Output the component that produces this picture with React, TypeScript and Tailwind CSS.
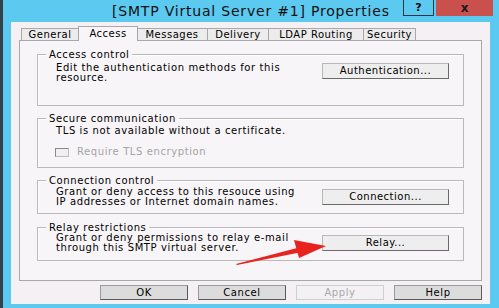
import React from "react";

const font = { fontFamily: '"DejaVu Sans", Verdana, sans-serif' };

const GroupButton = ({ label, top }: { label: string; top: string }) => (
  <button
    className={`${top} h-[16px] w-[127px] shrink-0 bg-[#eeeeee] border border-[#b8b8b8] border-r-[#6a6a6a] border-b-[#6a6a6a] text-[10px] leading-[12px] tracking-[0.5px] text-black`}
  >
    {label}
  </button>
);

const Group = ({
  title,
  height,
  className,
  children,
}: {
  title: string;
  height: string;
  className?: string;
  children: React.ReactNode;
}) => (
  <div
    className={`relative ${height} border border-[#b9b9b9] shadow-[inset_1px_1px_0_#ffffff] ${className ?? ""}`}
  >
    <span className="absolute left-[8px] -top-[6px] bg-[#f8f5f8] px-[3px] text-[10px] leading-[11px] tracking-[0.6px] text-black">
      {title}
    </span>
    {children}
  </div>
);

const tabs = [
  { label: "General", w: "w-[58px]" },
  { label: "Access", w: "w-[60px]", active: true },
  { label: "Messages", w: "w-[71px]" },
  { label: "Delivery", w: "w-[61px]" },
  { label: "LDAP Routing", w: "w-[95px]" },
  { label: "Security", w: "w-[52px]" },
];

export default function App() {
  return (
    <div
      className="relative w-[499px] h-[308px] overflow-hidden bg-[#5cc9f0] border-l-[3px] border-[#34434b] text-black"
      style={font}
    >
      {/* Title bar */}
      <div className="flex h-[22px]">
        <div className="w-[109px] shrink-0" />
        <div className="pt-[3px] text-[14px] leading-[16px] tracking-[0.8px] text-[#111]">
          [SMTP Virtual Server #1] Properties
        </div>
        <div className="flex-1" />
        <div className="flex h-[16px] items-start">
          <div className="flex h-[16px] w-[31px] items-center justify-center border border-[#2b3a42] border-t-0 text-[11px] font-bold leading-none">
            ?
          </div>
          <div className="ml-[2px] flex h-[16px] w-[57px] items-center justify-center bg-[#c9504d] text-[12px] font-bold leading-none text-[#1a1a1a]">
            x
          </div>
          <div className="w-[6px]" />
        </div>
      </div>

      {/* Client area */}
      <div className="ml-[8px] w-[479px] h-[282px] bg-[#f4f0f4] px-[8px] pt-[5px]">
        {/* Tabs */}
        <div className="flex h-[13px] items-end pl-[2px] tracking-[0.5px]">
          {tabs.map((t) =>
            t.active ? (
              <div
                key={t.label}
                className={`${t.w} relative z-10 -mb-[1px] -mx-[1px] h-[15px] border border-b-0 border-[#a8a8a8] bg-[#f8f5f8] text-center text-[10px] leading-[13px]`}
              >
                {t.label}
              </div>
            ) : (
              <div
                key={t.label}
                className={`${t.w} h-[12px] border border-b-0 border-l-0 first:border-l border-[#a8a8a8] bg-[#ececec] text-center text-[10px] leading-[11px]`}
              >
                {t.label}
              </div>
            )
          )}
        </div>

        {/* Tab panel */}
        <div className="h-[241px] border border-[#a8a8a8] bg-[#f8f5f8] px-[17px] pt-[13px] tracking-[0.6px]">
          <Group title="Access control" height="h-[52px]">
            <div className="flex justify-between pl-[18px] pr-[14px] pt-[8px]">
              <div className="text-[10px] leading-[10px]">
                Edit the authentication methods for this
                <br />
                resource.
              </div>
              <GroupButton label="Authentication..." top="mt-0" />
            </div>
          </Group>

          <Group title="Secure communication" height="h-[50px]" className="mt-[12px]">
            <div className="pl-[18px] pt-[7px] text-[10px] leading-[10px]">
              TLS is not available without a certificate.
            </div>
            <div className="mt-[11px] flex items-center pl-[17px]">
              <div className="h-[9px] w-[14px] border border-[#bdbdbd] border-t-[#8a8a8a] border-l-[#8a8a8a] bg-[#f0eef0]" />
              <span className="ml-[8px] text-[10px] leading-[10px] text-[#a4a4a4]">
                Require TLS encryption
              </span>
            </div>
          </Group>

          <Group title="Connection control" height="h-[34px]" className="mt-[12px]">
            <div className="flex justify-between pl-[18px] pr-[14px] pt-[6px]">
              <div className="text-[10px] leading-[10px]">
                Grant or deny access to this resouce using
                <br />
                IP addresses or Internet domain names.
              </div>
              <GroupButton label="Connection..." top="mt-[2px]" />
            </div>
          </Group>

          <Group title="Relay restrictions" height="h-[34px]" className="mt-[13px]">
            <div className="flex justify-between pl-[18px] pr-[14px] pt-[5px]">
              <div className="text-[10px] leading-[10px]">
                Grant or deny permissions to relay e-mail
                <br />
                through this SMTP virtual server.
              </div>
              <GroupButton label="Relay..." top="mt-[2px]" />
            </div>
          </Group>
        </div>

        {/* Dialog buttons */}
        <div className="mt-[4px] flex justify-end gap-[10px] tracking-[0.6px]">
          {["OK", "Cancel", "Apply", "Help"].map((b) => (
            <button
              key={b}
              className={
                b === "Apply"
                  ? "h-[15px] w-[88px] border border-[#cfcfcf] bg-[#f3f1f3] text-[10px] leading-[12px] text-[#a8a8a8]"
                  : "h-[15px] w-[88px] border border-[#9a9a9a] border-r-[#5a5a5a] border-b-[#5a5a5a] bg-[#dcdcdc] text-[10px] leading-[12px] text-black"
              }
            >
              {b}
            </button>
          ))}
        </div>
      </div>

      {/* Red annotation arrow */}
      <svg
        className="pointer-events-none absolute left-0 top-0"
        width="499"
        height="308"
        viewBox="0 0 499 308"
      >
        <polygon points="233,264 298,247 299,252 234,265" fill="#e8231f" />
        <polygon points="291,240 323,246 296,258" fill="#e8231f" />
      </svg>
    </div>
  );
}
